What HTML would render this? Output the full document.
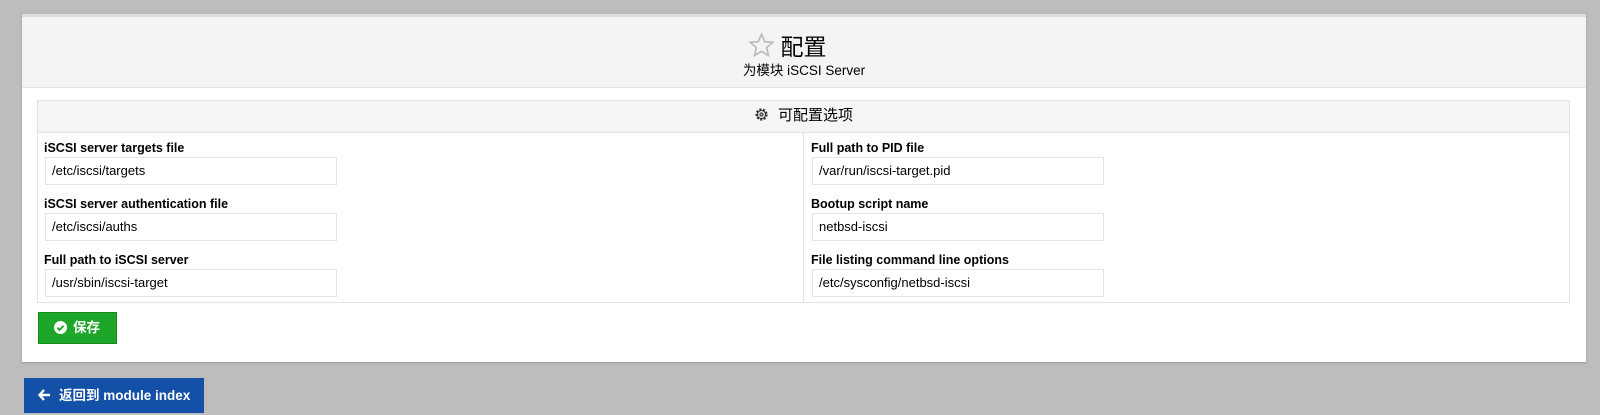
<!DOCTYPE html>
<html><head><meta charset="utf-8"><style>
body{margin:0;background:#bdbdbd;width:1600px;height:415px;position:relative;font-family:"Liberation Sans","Noto Sans CJK SC",sans-serif;color:#000;overflow:hidden}
.panel{position:absolute;left:22px;top:14px;width:1564px;height:345px;background:#fff;border-top:3px solid #ddd;box-shadow:0 1px 2px #999}
.head{height:70px;background:#f4f4f4;border-bottom:1px solid #e3e3e3}
.title{position:absolute;top:11px;left:-34px;right:0;text-align:center;font-size:23px}
.sub{position:absolute;top:42px;left:0;right:0;text-align:center;font-size:13.5px}
.box{position:absolute;left:15px;top:83px;width:1531px;height:201px;border:1px solid #e3e3e3}
.bh{height:31px;background:#f5f5f5;border-bottom:1px solid #e3e3e3;text-align:center;font-size:15px;line-height:30px}
.div{position:absolute;left:750px;top:32px;bottom:0;border-left:1px solid #e3e3e3}
.f{position:absolute;font-size:12.5px;font-weight:bold}
.in{position:absolute;border:1px solid #e3e3e3;font-size:13px;line-height:26px;padding-left:6px;box-sizing:border-box;width:292px;height:28px}
.save{position:absolute;left:16px;top:295px;width:79px;height:32px;background:#1ea628;border:1px solid #17891f;box-sizing:border-box;color:#fff;font-weight:bold;font-size:13.5px;line-height:30px}
.back{position:absolute;left:24px;top:378px;width:180px;height:35px;background:#1350a8;color:#fff;font-weight:bold;font-size:13.5px;line-height:35px}
</style></head><body>
<div class="panel">
<div class="head"></div>
<div class="title"><svg width="27" height="27" viewBox="0 0 24 24" style="vertical-align:-4px;margin-right:6px"><path d="M12 2l2.9 6.6 7.1.6-5.4 4.7 1.6 7-6.2-3.7-6.2 3.7 1.6-7L2 9.2l7.1-.6z" fill="none" stroke="#bbb" stroke-width="1.5"/></svg>配置</div>
<div class="sub">为模块 iSCSI Server</div>
<div class="box">
<div class="bh"><svg width="15" height="15" viewBox="0 0 16 16" style="vertical-align:-2px;margin-right:9px"><circle cx="8" cy="8" r="5.5" fill="none" stroke="#333" stroke-width="2" stroke-dasharray="2.2 1.7"/><circle cx="8" cy="8" r="4.3" fill="none" stroke="#333" stroke-width="1.2"/><circle cx="8" cy="8" r="1.8" fill="#999" stroke="#333"/></svg>可配置选项</div>
<div class="div" style="left:765px"></div>
<div class="f" style="left:6px;top:40px">iSCSI server targets file</div>
<div class="in" style="left:7px;top:56px">/etc/iscsi/targets</div>
<div class="f" style="left:6px;top:96px">iSCSI server authentication file</div>
<div class="in" style="left:7px;top:112px">/etc/iscsi/auths</div>
<div class="f" style="left:6px;top:152px">Full path to iSCSI server</div>
<div class="in" style="left:7px;top:168px">/usr/sbin/iscsi-target</div>
<div class="f" style="left:773px;top:40px">Full path to PID file</div>
<div class="in" style="left:774px;top:56px">/var/run/iscsi-target.pid</div>
<div class="f" style="left:773px;top:96px">Bootup script name</div>
<div class="in" style="left:774px;top:112px">netbsd-iscsi</div>
<div class="f" style="left:773px;top:152px">File listing command line options</div>
<div class="in" style="left:774px;top:168px">/etc/sysconfig/netbsd-iscsi</div>
</div>
<div class="save"><svg width="13" height="13" viewBox="0 0 12 12" style="vertical-align:-2px;margin:0 6px 0 15px"><circle cx="6" cy="6" r="6" fill="#fff"/><path d="M3.2 6.2l2 2 3.6-3.8" fill="none" stroke="#1ea628" stroke-width="1.8"/></svg>保存</div>
</div>
<div class="back"><svg width="13" height="12" viewBox="0 0 13 12" style="vertical-align:-1px;margin:0 8px 0 14px"><path d="M6 1L1.5 6 6 11M2 6h10" fill="none" stroke="#fff" stroke-width="2.4"/></svg>返回到 module index</div>
</body></html>
